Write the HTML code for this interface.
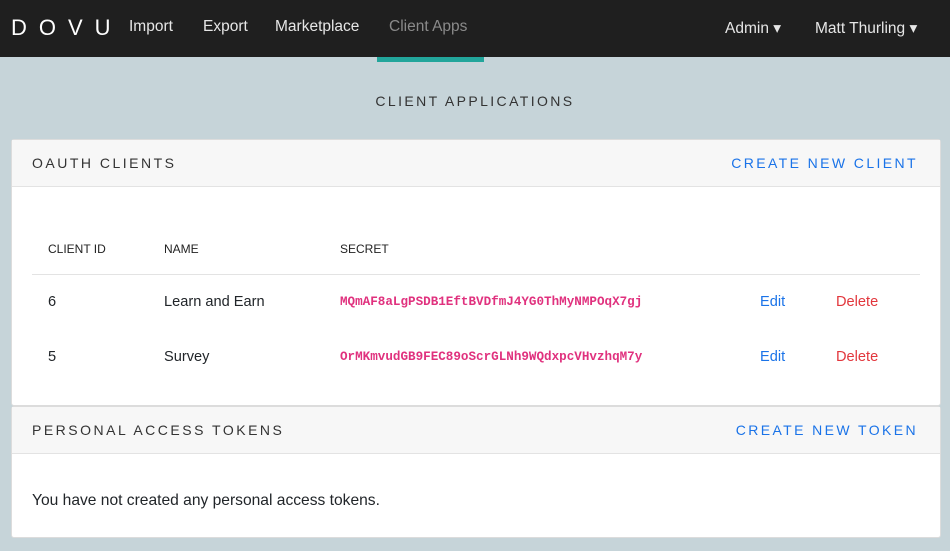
<!DOCTYPE html>
<html><head><style>
*{margin:0;padding:0;box-sizing:border-box}
body{width:950px;height:551px;background:#c6d4d9;font-family:"Liberation Sans",sans-serif;position:relative;overflow:hidden;color:#212529}
.nav{position:absolute;left:0;top:0;width:950px;height:57px;background:#1f1f1f}
.nav span{position:absolute;top:18px;font-size:15.5px;color:#e6e6e6}
.logo{position:absolute;left:11px;top:15px;font-size:22px;color:#fff;letter-spacing:12px;font-weight:300}
.ul{position:absolute;left:377px;top:57px;width:107px;height:5px;background:#22a59b}
.title{position:absolute;top:93px;width:950px;text-align:center;font-size:14px;letter-spacing:2.4px;color:#333}
.card{position:absolute;left:11px;width:930px;background:#fff;border:1px solid #dcdcdc;border-radius:3px}
.hd{height:47px;background:#f7f7f7;border-bottom:1px solid #e3e3e3;position:relative}
.hd b{position:absolute;left:20px;top:15px;font-weight:normal;font-size:14px;letter-spacing:2.5px;color:#333}
.hd a{position:absolute;right:22px;top:15px;font-size:14px;letter-spacing:2.4px;color:#1a73e8}
.t{position:absolute;font-size:14.6px}
.th{font-size:12px;color:#222}
.m{font-family:"Liberation Mono",monospace;color:#e0317e;font-weight:bold;font-size:12.6px}
.e{color:#1a73e8}.d{color:#e2363c}
</style></head><body>
<div class="nav">
<div class="logo">DOVU</div>
<span style="left:129px">Import</span>
<span style="left:203px">Export</span>
<span style="left:275px">Marketplace</span>
<span style="left:389px;color:#8a8a8a">Client Apps</span>
<span style="left:725px;top:19px">Admin ▾</span>
<span style="left:815px;top:19px">Matt Thurling ▾</span>
</div>
<div class="ul"></div>
<div class="title">CLIENT APPLICATIONS</div>
<div class="card" style="top:139px;height:267px">
<div class="hd"><b>OAUTH CLIENTS</b><a>CREATE NEW CLIENT</a></div>
<div class="t th" style="left:36px;top:102px">CLIENT ID</div>
<div class="t th" style="left:152px;top:102px">NAME</div>
<div class="t th" style="left:328px;top:102px">SECRET</div>
<div style="position:absolute;left:20px;top:134px;width:888px;height:1px;background:#e3e3e3"></div>
<div class="t" style="left:36px;top:154px">6</div>
<div class="t" style="left:152px;top:154px">Learn and Earn</div>
<div class="t m" style="left:328px;top:155px">MQmAF8aLgPSDB1EftBVDfmJ4YG0ThMyNMPOqX7gj</div>
<div class="t e" style="left:748px;top:154px">Edit</div>
<div class="t d" style="left:824px;top:154px">Delete</div>
<div class="t" style="left:36px;top:209px">5</div>
<div class="t" style="left:152px;top:209px">Survey</div>
<div class="t m" style="left:328px;top:210px">OrMKmvudGB9FEC89oScrGLNh9WQdxpcVHvzhqM7y</div>
<div class="t e" style="left:748px;top:209px">Edit</div>
<div class="t d" style="left:824px;top:209px">Delete</div>
</div>
<div class="card" style="top:406px;height:132px">
<div class="hd"><b>PERSONAL ACCESS TOKENS</b><a>CREATE NEW TOKEN</a></div>
<div class="t" style="left:20px;top:85px;font-size:15.6px">You have not created any personal access tokens.</div>
</div>
</body></html>
